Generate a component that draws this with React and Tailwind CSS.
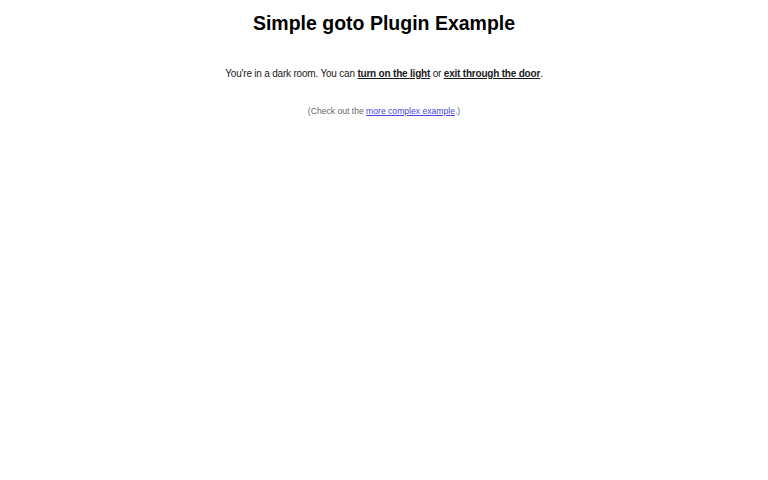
export default function App() {
  return (
    <div className="min-h-[480px] bg-white text-center font-['Liberation_Sans',Arial,sans-serif] text-black">
      <h1 className="pt-[11px] text-[19.5px] font-bold leading-[24px]">Simple goto Plugin Example</h1>

      <p className="mt-[32px] text-[10px] leading-[13px] tracking-[-0.2px] text-[#1a1a1a]">
        You're in a dark room. You can{" "}
        <a href="#light" className="font-bold text-[#1a1a1a] underline">turn on the light</a> or{" "}
        <a href="#door" className="font-bold text-[#1a1a1a] underline">exit through the door</a>.
      </p>

      <p className="mt-[26px] text-[8.6px] leading-[11px] text-[#666]">
        (Check out the{" "}
        <a href="#complex" className="text-[#4646d8] underline">more complex example</a>.)
      </p>
    </div>
  );
}
